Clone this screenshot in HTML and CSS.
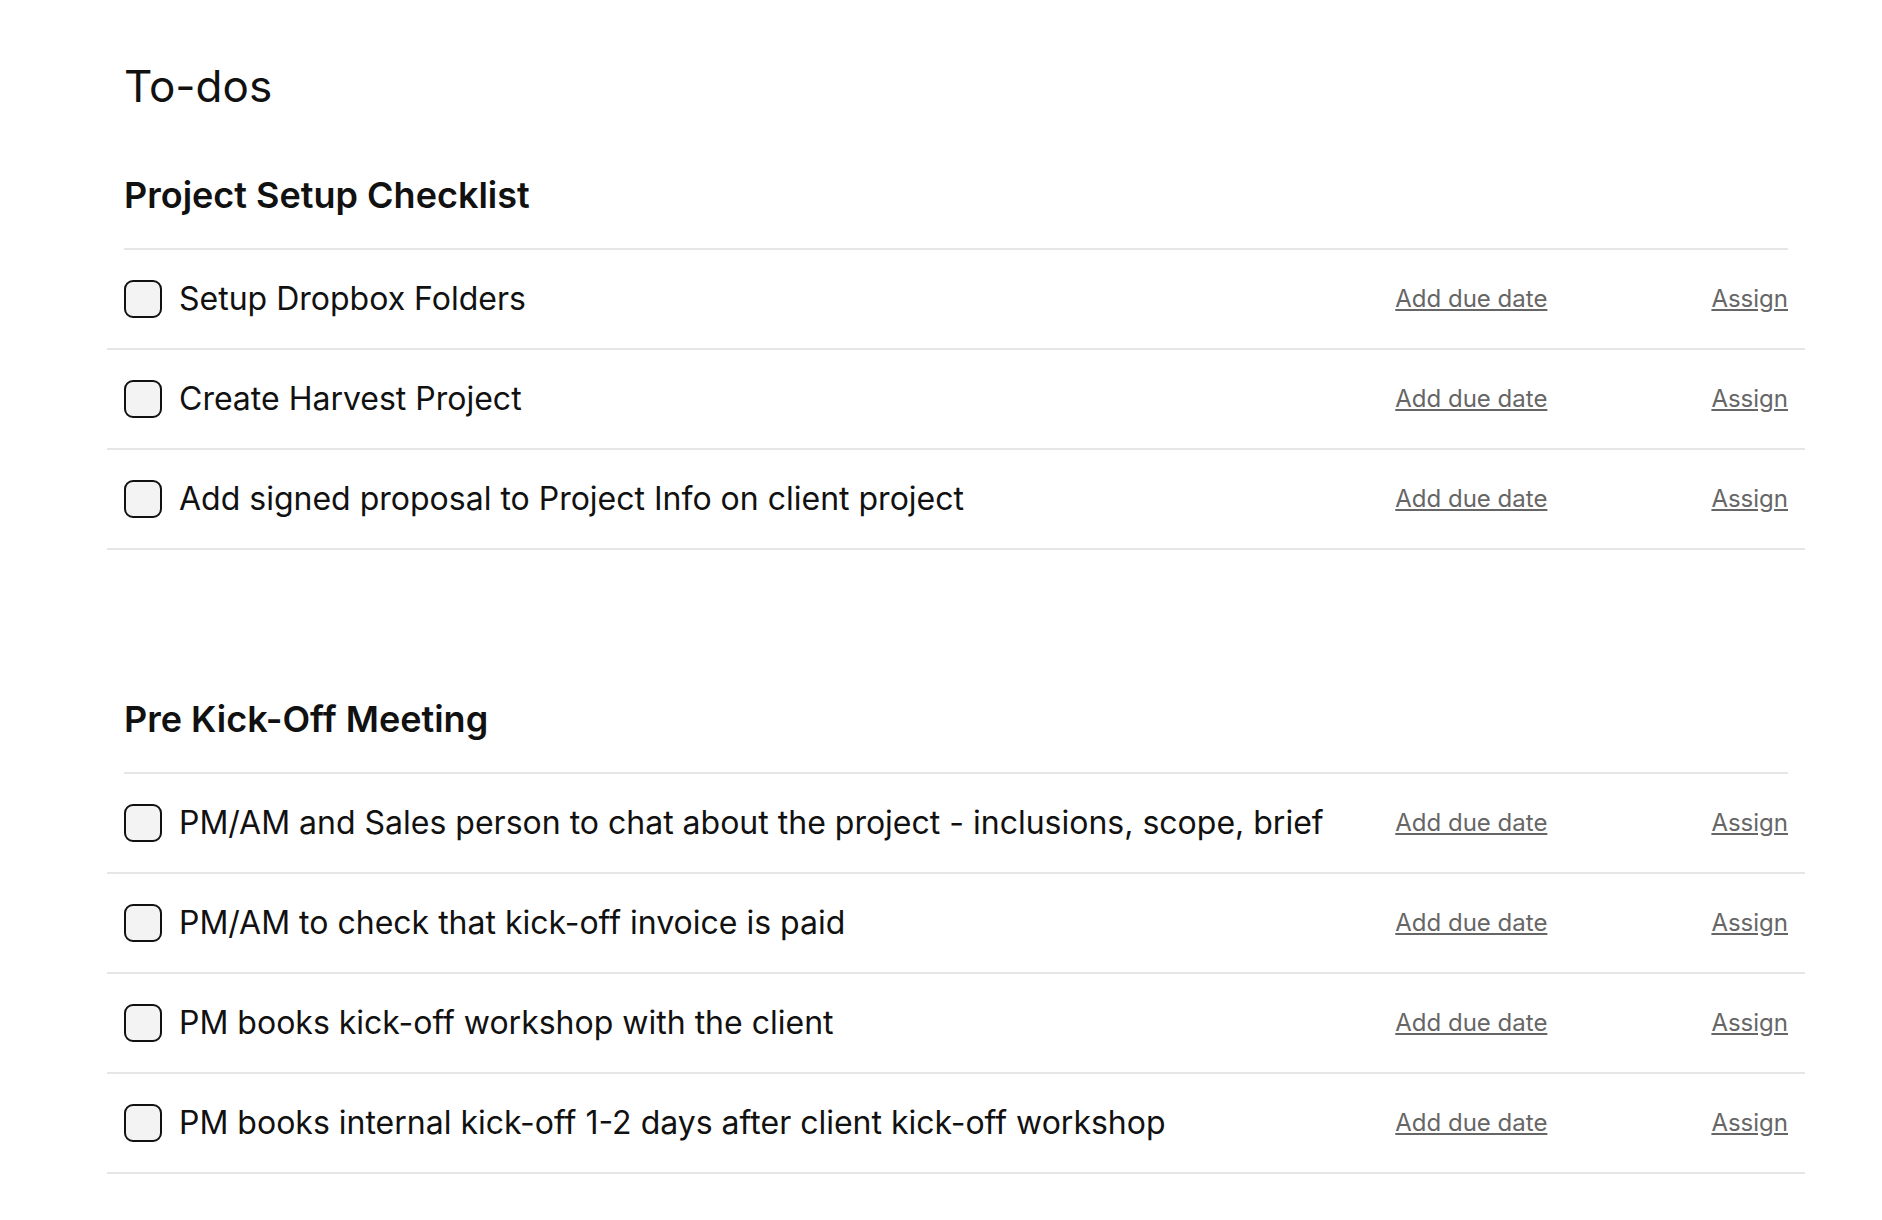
FILE: index.html
```html
<!DOCTYPE html>
<html lang="en">
<head>
    <meta charset="UTF-8" />
    <title>To-dos</title>
    <meta name="viewport" content="width=device-width, initial-scale=1" />
    <link rel="stylesheet" href="styles.css">
</head>
<body>
    <h1>To-dos</h1>

    <div class="section">
        <h2>Project Setup Checklist</h2>
        <div class="row"><input type="checkbox" /><span class="title">Setup Dropbox Folders</span><a href="#" class="due">Add due date</a><a href="#" class="assign">Assign</a></div>
        <div class="row"><input type="checkbox" /><span class="title">Create Harvest Project</span><a href="#" class="due">Add due date</a><a href="#" class="assign">Assign</a></div>
        <div class="row"><input type="checkbox" /><span class="title">Add signed proposal to Project Info on client project</span><a href="#" class="due">Add due date</a><a href="#" class="assign">Assign</a></div>
    </div>

    <div class="section">
        <h2>Pre Kick-Off Meeting</h2>
        <div class="row"><input type="checkbox" /><span class="title">PM/AM and Sales person to chat about the project - inclusions, scope, brief</span><a href="#" class="due">Add due date</a><a href="#" class="assign">Assign</a></div>
        <div class="row"><input type="checkbox" /><span class="title">PM/AM to check that kick-off invoice is paid</span><a href="#" class="due">Add due date</a><a href="#" class="assign">Assign</a></div>
        <div class="row"><input type="checkbox" /><span class="title">PM books kick-off workshop with the client</span><a href="#" class="due">Add due date</a><a href="#" class="assign">Assign</a></div>
        <div class="row"><input type="checkbox" /><span class="title">PM books internal kick-off 1-2 days after client kick-off workshop</span><a href="#" class="due">Add due date</a><a href="#" class="assign">Assign</a></div>
    </div>
</body>
</html>
```

FILE: styles.css
```css
body {
    font-family: Inter, "Noto Sans", sans-serif;
    margin: 0;
    padding: 60px 94px 40px 124px;
    background-color: #fff;
    color: #111;
}
h1 {
    margin: 0;
    font-size: 44px;
    line-height: 52px;
    font-weight: 400;
}
.section {
    margin-top: 62px;
}
.section + .section {
    margin-top: 148px;
}
h2 {
    margin: 0;
    font-size: 36px;
    line-height: 42px;
    font-weight: 600;
    padding-bottom: 32px;
    border-bottom: 2px solid #e6e6e6;
}
.row {
    display: flex;
    align-items: center;
    height: 98px;
    margin: 0 -17px;
    padding: 0 17px;
    border-bottom: 2px solid #e6e6e6;
}
.row input[type="checkbox"] {
    appearance: none;
    -webkit-appearance: none;
    flex: none;
    width: 38px;
    height: 38px;
    margin: 0 17px 0 0;
    background-color: #f3f3f3;
    border: 2px solid #111;
    border-radius: 9px;
}
.title {
    flex: 1;
    font-size: 32px;
    line-height: 38px;
}
.row a {
    font-size: 24px;
    line-height: 30px;
    color: #666;
}
.due {
    margin-left: 40px;
}
.assign {
    margin-left: 164px;
}
```
